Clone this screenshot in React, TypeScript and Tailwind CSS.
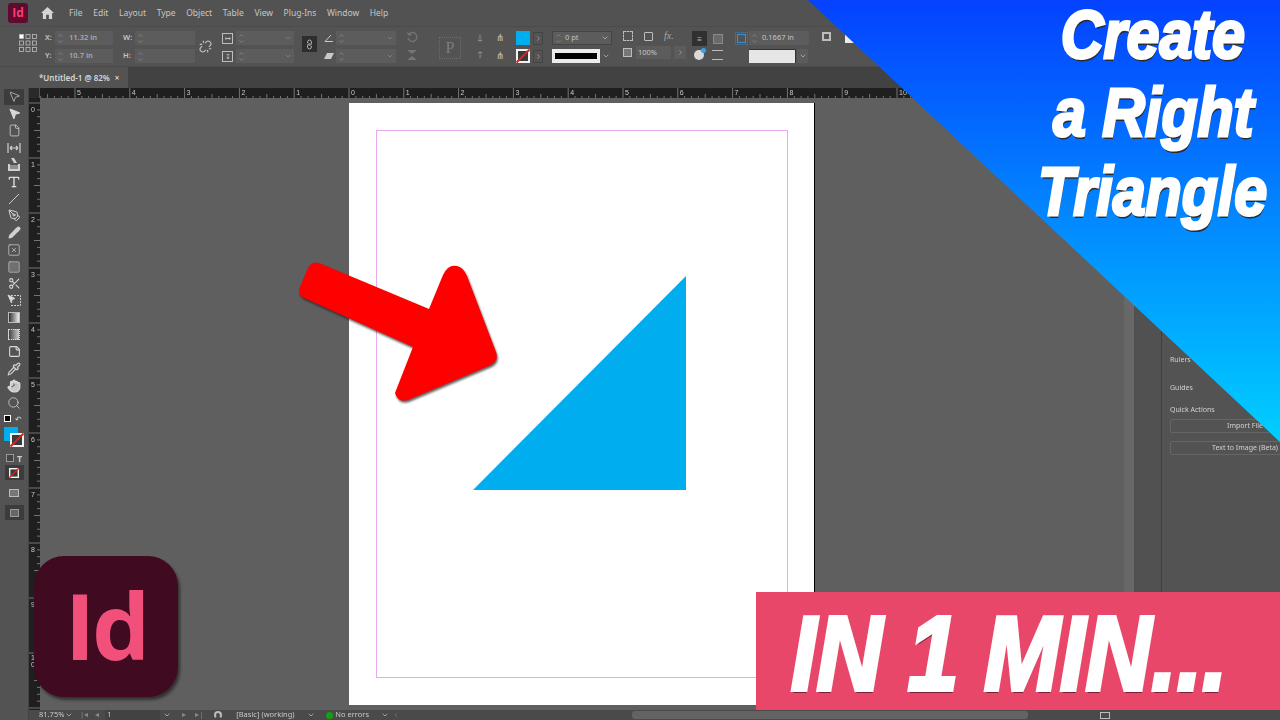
import type { ReactNode } from 'react';
import {
  ChevronDown,
  ChevronRight,
  ChevronUp,
  ChevronLeft,
  File,
  Hand,
  Link,
  MousePointer2,
  PenTool,
  Pencil,
  Pipette,
  Scissors,
  Search,
  Square,
  SquareX,
  StickyNote,
  Type,
  Unlink,
} from 'lucide-react';

const MENU = ['File', 'Edit', 'Layout', 'Type', 'Object', 'Table', 'View', 'Plug-Ins', 'Window', 'Help'];

// --- small control bar pieces ---

function Spin() {
  return (
    <span className="flex w-[10px] flex-col items-center text-[#9a9a9a]">
      <ChevronUp size={7} className="-mb-[1px]" />
      <ChevronDown size={7} />
    </span>
  );
}

function Field({ value, width, menu }: { value?: string; width: string; menu?: boolean }) {
  return (
    <div className={`flex h-[14px] items-center bg-[#5c5c5c] ${width}`}>
      <Spin />
      <span className="ml-[4px] flex-1 text-[7.5px] text-[#a8a8a8]">{value}</span>
      {menu && <ChevronDown size={8} className="mr-[2px] text-[#8e8e8e]" />}
    </div>
  );
}

function NoStroke({ className }: { className: string }) {
  return (
    <svg viewBox="0 0 14 14" className={className}>
      <rect width="14" height="14" fill="#f2f2f2" />
      <rect x="2" y="2" width="10" height="10" fill="#3a3a3a" />
      <path d="M0.5 13.5 13.5 0.5" stroke="#e02020" strokeWidth="2" />
    </svg>
  );
}

function ControlBar() {
  return (
    <div className="flex h-[41px] items-start border-y border-[#4b4b4b] bg-[#535353] pt-[4px] text-[#c4c4c4]">
      <svg viewBox="0 0 18 18" className="ml-[19px] mt-[3px] h-[18px] w-[18px]" fill="none" stroke="#bdbdbd" strokeWidth="0.8">
        {[0, 6.5, 13].map((y) =>
          [0, 6.5, 13].map((x) => (
            <rect key={`${x}-${y}`} x={x + 0.5} y={y + 0.5} width="4" height="4" fill={x === 0 && y === 0 ? '#fff' : 'none'} />
          )),
        )}
      </svg>

      <div className="ml-[8px] flex flex-col gap-[4px] text-[7.5px] font-semibold">
        <div className="flex h-[14px] items-center gap-[3px]"><span className="w-[7px]">X:</span><Field value="11.32 in" width="w-[58px]" /></div>
        <div className="flex h-[14px] items-center gap-[3px]"><span className="w-[7px]">Y:</span><Field value="10.7 in" width="w-[58px]" /></div>
      </div>
      <div className="ml-[10px] flex flex-col gap-[4px] text-[7.5px] font-semibold">
        <div className="flex h-[14px] items-center gap-[3px]"><span className="w-[9px]">W:</span><Field width="w-[60px]" /></div>
        <div className="flex h-[14px] items-center gap-[3px]"><span className="w-[9px]">H:</span><Field width="w-[60px]" /></div>
      </div>

      <Unlink size={13} className="ml-[4px] mt-[9px]" />

      <div className="ml-[10px] flex flex-col gap-[4px]">
        <div className="flex items-center gap-[3px]">
          <span className="flex h-[11px] w-[11px] items-center justify-center border border-[#bdbdbd] text-[7px] leading-none">↦</span>
          <Field width="w-[58px]" menu />
        </div>
        <div className="flex items-center gap-[3px]">
          <span className="flex h-[11px] w-[11px] items-center justify-center border border-[#bdbdbd] text-[7px] leading-none">↧</span>
          <Field width="w-[58px]" menu />
        </div>
      </div>

      <span className="ml-[8px] mt-[5px] flex h-[16px] w-[15px] items-center justify-center bg-[#2e2e2e]">
        <Link size={9} className="rotate-[-45deg] text-[#dcdcdc]" />
      </span>

      <div className="ml-[7px] flex flex-col gap-[4px]">
        <div className="flex items-center gap-[2px]">
          <svg viewBox="0 0 10 10" className="h-[10px] w-[10px]" fill="none" stroke="#c8c8c8"><path d="M1 8.5h8M1 8.5 7 2" /></svg>
          <Field width="w-[60px]" menu />
        </div>
        <div className="flex items-center gap-[2px]">
          <svg viewBox="0 0 10 10" className="h-[10px] w-[10px]" fill="#c8c8c8"><path d="M3 2h7L7 8H0z" /></svg>
          <Field width="w-[60px]" menu />
        </div>
      </div>

      <div className="ml-[10px] flex flex-col gap-[6px] text-[#6f6f6f]">
        <svg viewBox="0 0 12 12" className="h-[12px] w-[12px]" fill="none" stroke="#757575" strokeWidth="1.3"><path d="M2 7a4.5 4.5 0 1 0 1-4M1.5 1.5 3 4l2.5-.8" /></svg>
        <svg viewBox="0 0 12 12" className="h-[12px] w-[12px]" fill="#757575"><path d="M1 1h10L6 5zM1 11h10L6 7z" /></svg>
      </div>

      <span className="ml-[21px] mt-[6px] flex h-[22px] w-[22px] items-center justify-center border border-dotted border-[#6c6c6c] font-['Liberation_Serif',serif] text-[16px] text-[#7d7d7d]">P</span>

      <div className="ml-[12px] grid grid-cols-2 gap-x-[7px] gap-y-[7px] pt-[1px] text-[#8f8f8f]">
        {['⍋', '⋔', '⍒', '⋔'].map((g, i) => (
          <span key={i} className={`flex h-[11px] w-[13px] items-center justify-center text-[10px] ${i % 2 ? 'text-[#c0c0c0]' : ''}`}>{g}</span>
        ))}
      </div>

      <div className="ml-[10px] flex flex-col gap-[4px]">
        <div className="flex items-center gap-[3px]">
          <span className="h-[14px] w-[14px] bg-[#00adee]" />
          <span className="flex h-[13px] w-[10px] items-center justify-center border border-[#444]"><ChevronRight size={7} /></span>
        </div>
        <div className="flex items-center gap-[3px]">
          <NoStroke className="h-[14px] w-[14px]" />
          <span className="flex h-[13px] w-[10px] items-center justify-center border border-[#444]"><ChevronRight size={7} /></span>
        </div>
      </div>

      <div className="ml-[9px] flex flex-col gap-[4px]">
        <div className="flex h-[14px] w-[60px] items-center border border-[#444] bg-[#5c5c5c]">
          <Spin />
          <span className="ml-[2px] flex-1 text-[7.5px]">0 pt</span>
          <ChevronDown size={8} className="mr-[2px]" />
        </div>
        <div className="flex h-[14px] w-[60px] items-center">
          <span className="flex h-[14px] w-[48px] items-center bg-[#ececec] px-[3px]"><span className="h-[6px] w-full bg-black" /></span>
          <ChevronDown size={8} className="ml-[2px]" />
        </div>
      </div>

      <div className="ml-[11px] flex flex-col gap-[5px]">
        <div className="flex items-center gap-[11px]">
          <span className="h-[10px] w-[10px] border border-dashed border-[#bdbdbd]" />
          <span className="h-[9px] w-[9px] rounded-[1px] border border-[#bdbdbd]" />
          <span className="font-['Liberation_Serif',serif] text-[10px] italic leading-none text-[#a8a8a8]">fx.</span>
        </div>
        <div className="flex items-center gap-[3px]">
          <span className="mr-[1px] h-[9px] w-[9px] border border-[#bdbdbd] bg-[#777]" />
          <span className="flex h-[13px] w-[35px] items-center bg-[#5c5c5c] pl-[2px] text-[7.5px]">100%</span>
          <span className="flex h-[13px] w-[12px] items-center justify-center bg-[#5c5c5c]"><ChevronRight size={7} /></span>
        </div>
      </div>

      <div className="ml-[6px] flex flex-col gap-[4px]">
        <div className="flex items-center gap-[6px]">
          <span className="flex h-[15px] w-[15px] items-center justify-center bg-[#303030] text-[8px] leading-none text-[#bbb]">≡</span>
          <span className="h-[10px] w-[10px] border border-[#8a8a8a] bg-[#6a6a6a]" />
        </div>
        <div className="flex items-center gap-[8px] pl-[2px]">
          <span className="relative h-[10px] w-[10px] rounded-full bg-[#d9d9d9]"><span className="absolute -right-[2px] -top-[2px] h-[5px] w-[5px] rounded-full bg-[#36a3e8]" /></span>
          <span className="flex h-[10px] w-[11px] flex-col justify-between border-y border-[#bdbdbd]" />
        </div>
      </div>

      <div className="ml-[14px] flex flex-col gap-[4px]">
        <div className="flex items-center gap-[2px]">
          <span className="mr-[1px] h-[9px] w-[9px] border border-[#3f8fcf] outline-1 outline-offset-1 outline-[#3f8fcf]/40" />
          <span className="flex h-[14px] w-[60px] items-center bg-[#5c5c5c]"><Spin /><span className="ml-[3px] text-[7.5px]">0.1667 in</span></span>
        </div>
        <div className="ml-[12px] flex items-center gap-[1px]">
          <span className="h-[14px] w-[47px] border-t border-r border-[#333] bg-[#e6e6e6]" />
          <span className="flex h-[14px] w-[11px] items-center justify-center bg-[#5c5c5c]"><ChevronDown size={8} /></span>
        </div>
      </div>

      <span className="ml-[13px] mt-[1px] h-[9px] w-[9px] border-2 border-[#bdbdbd]" />
      <span className="ml-[14px] mt-[-1px] h-[13px] w-[13px] bg-[#ececec]" />
    </div>
  );
}

// --- tools panel ---

function GapIcon() {
  return (
    <svg viewBox="0 0 14 12" className="h-[12px] w-[14px]" fill="none" stroke="#d0d0d0" strokeWidth="1.2">
      <path d="M1 1v10M13 1v10M3 6h8M3 6l2-2M3 6l2 2M11 6 9 4M11 6 9 8" />
    </svg>
  );
}

function CollectorIcon() {
  return (
    <svg viewBox="0 0 14 13" className="h-[13px] w-[14px]" fill="#d0d0d0">
      <path d="M1 6h2v5h8V6h2v7H1z" />
      <path d="M3 7h8v4H3z" fill="#8e8e8e" />
      <path d="M4 0h3l3 5H7z" />
    </svg>
  );
}

function LineIcon() {
  return (
    <svg viewBox="0 0 12 12" className="h-[12px] w-[12px]" stroke="#cfcfcf" strokeWidth="1"><path d="M1 11 11 1" /></svg>
  );
}

function TransformIcon() {
  return (
    <svg viewBox="0 0 15 13" className="h-[13px] w-[15px]" fill="none" stroke="#cfcfcf">
      <path d="M4 1.5h9.5v10H4" strokeDasharray="2 1" />
      <path d="M1 1l7 3.5-3 1L4.5 9z" fill="#e0e0e0" />
    </svg>
  );
}

const TOOLS: ReactNode[] = [
  <span key="sel" className="flex h-[16px] w-[20px] items-center justify-center bg-[#3c3c3c]"><MousePointer2 size={13} strokeWidth={1.3} className="text-[#d0d0d0]" /></span>,
  <MousePointer2 key="direct" size={13} fill="#d8d8d8" className="text-[#d8d8d8]" />,
  <File key="page" size={13} strokeWidth={1.5} className="text-[#d0d0d0]" />,
  <GapIcon key="gap" />,
  <CollectorIcon key="coll" />,
  <Type key="type" size={14} strokeWidth={2.4} className="text-[#dcdcdc]" />,
  <LineIcon key="line" />,
  <PenTool key="pen" size={13} strokeWidth={1.7} className="text-[#dcdcdc]" />,
  <Pencil key="pencil" size={13} fill="#d0d0d0" className="text-[#d0d0d0]" />,
  <SquareX key="frame" size={14} strokeWidth={1.2} className="text-[#cfcfcf]" />,
  <Square key="rect" size={14} strokeWidth={1.2} fill="#707070" className="text-[#bdbdbd]" />,
  <Scissors key="sc" size={13} className="text-[#d8d8d8]" />,
  <TransformIcon key="tr" />,
  <span key="grad" className="h-[11px] w-[12px] border border-[#bbb] bg-[linear-gradient(90deg,#333,#eee)]" />,
  <span key="fea" className="h-[11px] w-[12px] border border-dotted border-[#ddd] bg-[linear-gradient(90deg,#444,#ccc)]" />,
  <StickyNote key="note" size={13} className="text-[#d8d8d8]" />,
  <Pipette key="eye" size={14} className="text-[#d0d0d0]" />,
  <Hand key="hand" size={14} fill="#c8c8c8" className="text-[#dedede]" />,
  <Search key="zoom" size={14} strokeWidth={1.4} className="text-[#cfcfcf]" />,
];

function ToolsPanel() {
  return (
    <div className="flex w-[29px] shrink-0 flex-col items-center border-r border-[#444] bg-[#535353]">
      {TOOLS.map((tool, i) => (
        <div key={i} className="flex h-[17px] w-full items-center justify-center">{tool}</div>
      ))}
      <div className="mt-[3px] flex h-[9px] w-full items-center gap-[4px] pl-[4px]">
        <span className="h-[7px] w-[7px] border border-white bg-black" />
        <span className="text-[8px] leading-none text-[#d0d0d0]">↶</span>
      </div>
      <div className="relative mt-[4px] ml-[4px] h-[20px] w-[20px] self-start">
        <span className="absolute left-0 top-0 h-[14px] w-[14px] bg-[#00adee]" />
        <NoStroke className="absolute left-[6px] top-[6px] h-[14px] w-[14px]" />
      </div>
      <div className="mt-[6px] flex h-[10px] items-center gap-[3px]">
        <span className="h-[8px] w-[8px] border border-[#999] bg-[#444]" />
        <span className="text-[9px] font-bold leading-none text-[#ccc]">T</span>
      </div>
      <span className="mt-[2px] flex h-[15px] w-[19px] items-center justify-center bg-[#3c3c3c]"><NoStroke className="h-[10px] w-[12px]" /></span>
      <span className="mt-[9px] h-[8px] w-[10px] border border-[#bbb] bg-[#777]" />
      <span className="mt-[8px] flex h-[15px] w-[19px] items-center justify-center bg-[#3c3c3c]"><span className="h-[8px] w-[9px] border border-[#999] bg-[#666]" /></span>
    </div>
  );
}

// --- rulers ---

function TopRuler() {
  const labels = [5, 4, 3, 2, 1, 0, 1, 2, 3, 4, 5, 6, 7, 8, 9, 10];
  return (
    <svg className="block h-[10px] w-[1240px] bg-[#1f1f1f]" viewBox="0 0 1240 10">
      {Array.from({ length: 184 }, (_, i) => {
        const x = 35 + (i - 8) * 6.85;
        const major = (i - 8) % 8 === 0;
        const mid = (i - 8) % 4 === 0;
        return <path key={i} d={`M${x} 10V${major ? 0 : mid ? 6 : 8}`} stroke="#9a9a9a" strokeWidth="0.7" />;
      })}
      {labels.map((n, i) => (
        <text key={i} x={35 + i * 54.8 + 2} y="7" fontSize="7" fill="#c8c8c8" fontFamily="Liberation Sans">{n}</text>
      ))}
    </svg>
  );
}

function LeftRuler() {
  return (
    <svg className="block h-[612px] w-[11px] shrink-0 bg-[#1f1f1f]" viewBox="0 0 11 612">
      {Array.from({ length: 92 }, (_, i) => {
        const y = 5 + i * 6.875;
        const major = i % 8 === 0;
        return <path key={i} d={`M${major ? 0 : i % 4 === 0 ? 5 : 8} ${y}H11`} stroke="#9a9a9a" strokeWidth="0.7" />;
      })}
      {[0, 1, 2, 3, 4, 5, 6, 7, 8, 9].map((n) => (
        <text key={n} x="2" y={5 + n * 55 + 9} fontSize="7" fill="#c8c8c8" fontFamily="Liberation Sans">{n}</text>
      ))}
      <text x="2" y="562" fontSize="7" fill="#c8c8c8" fontFamily="Liberation Sans">1</text>
      <text x="2" y="569" fontSize="7" fill="#c8c8c8" fontFamily="Liberation Sans">0</text>
    </svg>
  );
}

// --- status bar ---

function StatusBar() {
  return (
    <div className="flex h-[10px] items-center bg-[#4a4a4a] text-[7.5px] leading-none text-[#c8c8c8]">
      <span className="ml-[10px] w-[27px]">81.75%</span>
      <ChevronDown size={8} className="ml-[-1px]" />
      <span className="ml-[7px] text-[#8a8a8a]">|◂</span>
      <span className="ml-[7px] text-[#8a8a8a]">◂</span>
      <span className="ml-[6px] flex h-[10px] w-[55px] items-center bg-[#424242] pl-[2px]">1</span>
      <ChevronDown size={8} className="ml-[3px]" />
      <span className="ml-[11px] text-[#8a8a8a]">▸</span>
      <span className="ml-[9px] text-[#8a8a8a]">▸|</span>
      <span className="ml-[11px] h-[8px] w-[8px] rounded-full border-2 border-[#bbb] border-b-transparent" />
      <span className="ml-[14px] w-[62px]">[Basic] (working)</span>
      <ChevronDown size={8} className="ml-[9px]" />
      <span className="ml-[11px] h-[7px] w-[7px] rounded-full bg-[#12a012]" />
      <span className="ml-[2px] w-[38px]">No errors</span>
      <ChevronDown size={8} className="ml-[8px]" />
      <ChevronLeft size={8} className="ml-[3px] text-[#777]" />
      <div className="ml-[232px] h-[8px] w-[396px] rounded-[3px] bg-[#636363]" />
      <span className="ml-[72px] h-[7px] w-[10px] border border-[#bdbdbd]" />
    </div>
  );
}

export default function App() {
  return (
    <div className="relative flex h-[720px] w-[1280px] flex-col overflow-hidden bg-[#535353] font-['Noto_Sans','Liberation_Sans',sans-serif]">
      <div className="flex h-full flex-col blur-[0.35px]">
        {/* menu */}
        <div className="flex h-[26px] shrink-0 items-center bg-[#525252] pl-[8px]">
          <span className="flex h-[20px] w-[20px] items-center justify-center rounded-[3px] bg-[#5d0b2e] font-['Open_Sans',sans-serif] text-[12px] font-bold text-[#ff3a75]">Id</span>
          <svg viewBox="0 0 14 13" className="ml-[13px] h-[12px] w-[13px]" fill="#d4d4d4"><path d="M7 0 14 6.5h-2V13H8.5V8.5h-3V13H2V6.5H0z" /></svg>
          <div className="ml-[15px] flex gap-[10.6px] text-[8.5px] text-[#c6c6c6]">
            {MENU.map((m) => <span key={m}>{m}</span>)}
          </div>
        </div>

        <ControlBar />

        {/* tabs */}
        <div className="flex h-[21px] shrink-0 bg-[#424242]">
          <div className="w-[29px] bg-[#535353]" />
          <div className="flex w-[99px] items-center gap-[5px] bg-[#535353] pl-[10px] text-[8px] font-semibold text-[#d8d8d8]">
            <span>*Untitled-1 @ 82%</span>
            <span className="text-[8px] leading-none">×</span>
          </div>
        </div>

        <div className="flex min-h-0 flex-1">
          <ToolsPanel />
          <div className="flex min-w-0 flex-1 flex-col">
            <div className="flex h-[10px] shrink-0">
              <div className="w-[11px] shrink-0 border-r border-[#555] bg-[#2a2a2a]" />
              <TopRuler />
            </div>
            <div className="flex min-h-0 flex-1">
              <LeftRuler />
              <div className="w-[1084px] shrink-0 bg-[#5f5f5f] pl-[309px] pt-[5px]">
                <div className="relative h-[602px] w-[466px] border-r border-black bg-white p-[27px]">
                  <div className="h-[548px] w-[412px] border border-[#e9a9ee]" />
                  <svg viewBox="0 0 214 215" className="absolute left-[124px] top-[173px] h-[215px] w-[214px]">
                    <path d="M213 0v214H0z" fill="#00adee" />
                  </svg>
                </div>
              </div>
              <div className="w-[10px] shrink-0 bg-[#686868]" />
              <div className="w-[28px] shrink-0 border-r border-[#3f3f3f] bg-[#515151]" />
              <div className="flex-1 bg-[#535353] pl-[8px] pt-[257px] text-[7px] text-[#d2d2d2]">
                <div className="h-[12px]">Rulers</div>
                <div className="mt-[16px] h-[12px]">Guides</div>
                <div className="mt-[10px] h-[12px]">Quick Actions</div>
                <div className="mt-[2px] flex h-[14px] w-[150px] items-center justify-center rounded-[2px] border border-[#666]">Import File</div>
                <div className="mt-[8px] flex h-[14px] w-[150px] items-center justify-center rounded-[2px] border border-[#666]">Text to Image (Beta)</div>
              </div>
            </div>
            <StatusBar />
          </div>
        </div>
      </div>

      {/* thumbnail overlays */}
      <svg viewBox="0 0 1280 720" className="absolute inset-0 h-[720px] w-[1280px] drop-shadow-[1px_2px_1px_rgba(30,30,30,0.7)]">
        <path
          d="M319 263 429 309 443 275Q448 264 457 266 463 267 467 276L496 352Q499 361 491 365L408 400Q398 403 395 393L413 347 304 298Q297 294 300 287L308 268Q312 261 319 263Z"
          fill="#ff0000"
        />
      </svg>

      <div className="absolute left-0 top-0 h-[443px] w-[1280px] bg-[linear-gradient(180deg,#0442ff,#00d0ff)] [clip-path:polygon(808px_0,1280px_0,1280px_442px)]" />

      <div className="absolute left-[1026px] top-0 flex w-[254px] flex-col items-center font-['Liberation_Sans',sans-serif] text-[68px] font-bold italic leading-none text-white [-webkit-text-stroke:3px_white] [text-shadow:1px_3px_0_#2b2b2b]">
        <span className="h-[78px] scale-x-[0.87] whitespace-nowrap">Create</span>
        <span className="h-[79px] scale-x-[0.87] whitespace-nowrap">a Right</span>
        <span className="scale-x-[0.87] whitespace-nowrap">Triangle</span>
      </div>

      <div className="absolute left-[34px] top-[556px] flex h-[141px] w-[144px] items-center justify-center rounded-[30px] bg-[#400a20] pb-[3px] font-['Open_Sans',sans-serif] text-[92px] font-bold leading-none tracking-[-3px] text-[#f0507a] shadow-[2px_3px_3px_rgba(20,20,20,0.6)]">
        Id
      </div>

      <div className="absolute left-[756px] top-[592px] flex h-[118px] w-[524px] items-center bg-[#e8476a] pl-[35px] pt-[5px] font-['Liberation_Sans',sans-serif] text-white">
        <span className="origin-left whitespace-nowrap text-[105px] font-bold italic leading-none [-webkit-text-stroke:4px_white] [text-shadow:1px_3px_0_#7a2036] [transform:scaleX(0.87)]">IN 1 MIN...</span>
      </div>
    </div>
  );
}
